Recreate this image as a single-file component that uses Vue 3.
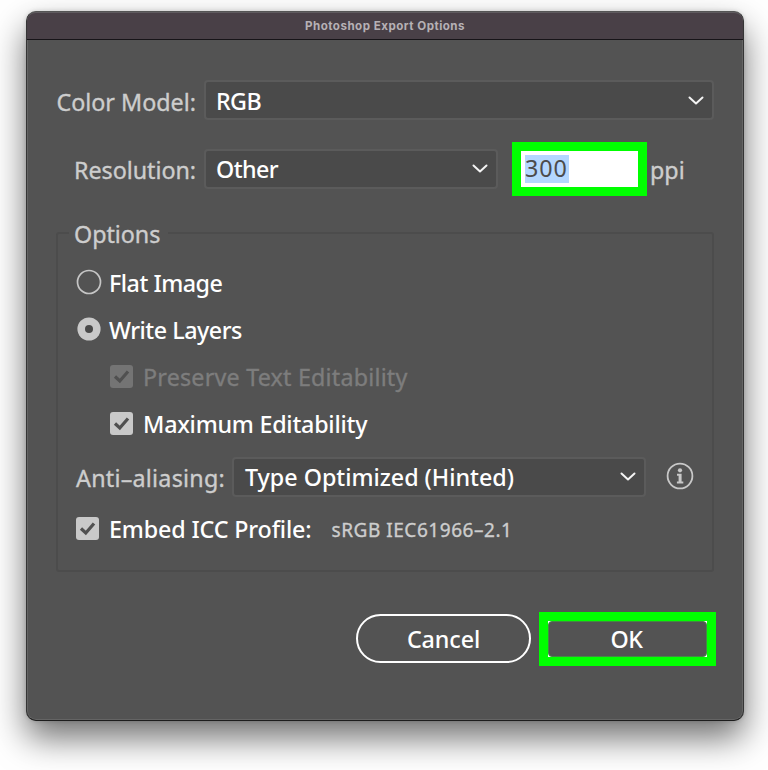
<script setup>
import { ref } from 'vue'

const resolution = ref('300')
const layerMode = ref('layers')
const modes = [
  { id: 'flat', label: 'Flat Image' },
  { id: 'layers', label: 'Write Layers' },
]
</script>

<template>
  <main class="desktop">
    <section class="dialog">
      <header class="titlebar">Photoshop Export Options</header>
      <div class="content">
        <div class="row model-row">
          <label class="label t-model">Color Model:</label>
          <div class="select wide">
            <span class="t-rgb">RGB</span>
            <svg class="chevron" viewBox="0 0 16 10"><path d="M1.5 1.5 8 7.5l6.5-6" /></svg>
          </div>
        </div>
        <div class="row res-row">
          <label class="label t-res">Resolution:</label>
          <div class="select mid">
            <span class="t-other">Other</span>
            <svg class="chevron" viewBox="0 0 16 10"><path d="M1.5 1.5 8 7.5l6.5-6" /></svg>
          </div>
          <div class="field"><span class="selection">{{ resolution }}</span></div>
          <span class="unit">ppi</span>
        </div>

        <div class="group">
          <div class="legend"><span class="t-options">Options</span></div>
          <div class="group-body">
            <div v-for="m in modes" :key="m.id" class="choice" :class="m.id" @click="layerMode = m.id">
              <svg class="radio" viewBox="0 0 26 26">
                <template v-if="layerMode === m.id">
                  <circle cx="13" cy="13" r="11.6" fill="#c9c9c9" />
                  <circle cx="13" cy="13" r="4" fill="#4a4a4a" />
                </template>
                <circle v-else cx="13" cy="13" r="11.5" fill="none" stroke="#c6c6c6" stroke-width="1.7" />
              </svg>
              <span>{{ m.label }}</span>
            </div>
            <div class="check preserve">
              <svg class="box" viewBox="0 0 23 23"><rect width="23" height="23" rx="3" /><path d="M5 11.5 9.8 16 18 6.5" /></svg>
              <span>Preserve Text Editability</span>
            </div>
            <div class="check maximum">
              <svg class="box" viewBox="0 0 23 23"><rect width="23" height="23" rx="3" /><path d="M5 11.5 9.8 16 18 6.5" /></svg>
              <span>Maximum Editability</span>
            </div>
            <div class="row aa-row">
              <label class="label t-aa">Anti–aliasing:</label>
              <div class="select aa">
                <span class="t-type">Type Optimized (Hinted)</span>
                <svg class="chevron" viewBox="0 0 16 10"><path d="M1.5 1.5 8 7.5l6.5-6" /></svg>
              </div>
              <svg class="info" viewBox="0 0 28 28">
                <circle cx="14" cy="14" r="12.4" fill="none" stroke="#c8c8c8" stroke-width="1.8" />
                <circle cx="14" cy="8.3" r="2.1" fill="#c8c8c8" />
                <path d="M11 11.8h4.6v7.7h1.7v1.9h-6.4v-1.900h1.700v-5.800H11z" fill="#c8c8c8" />
              </svg>
            </div>
            <div class="check embed">
              <svg class="box" viewBox="0 0 23 23"><rect width="23" height="23" rx="3" /><path d="M5 11.5 9.8 16 18 6.5" /></svg>
              <span class="t-embed">Embed ICC Profile:</span>
              <span class="profile">sRGB IEC61966–2.1</span>
            </div>
          </div>
        </div>

        <div class="actions">
          <button class="cancel"><span>Cancel</span></button>
          <div class="ok-frame"><button class="ok"><span>OK</span></button></div>
        </div>
      </div>
    </section>
  </main>
</template>

<style>
body {
  margin: 0;
  background: #fff;
}
</style>

<style scoped>
* {
  box-sizing: border-box;
}
.desktop {
  height: 770px;
  padding: 11px 0 0 26px;
  overflow: hidden;
  font-family: "Noto Sans", "Open Sans", sans-serif;
  font-size: 23.3px;
  font-weight: 500;
  line-height: 30px;
  color: #fff;
  white-space: nowrap;
}
.dialog {
  width: 718px;
  height: 710px;
  border: 1px solid #353535;
  border-top-color: #555;
  border-bottom-color: #1d1d1d;
  border-radius: 10px;
  background: #535353;
  box-shadow: inset 0 0 0 1px #646464, 0 17px 34px rgba(0, 0, 0, 0.56), 0 0 4px rgba(0, 0, 0, 0.16);
}
.titlebar {
  height: 28px;
  border-top: 1px solid #605c60;
  border-bottom: 1px solid #171418;
  border-radius: 9px 9px 0 0;
  background: #494047;
  font: 700 11.6px/27px Inter, sans-serif;
  letter-spacing: 0.48px;
  color: #b6b1b5;
  text-align: center;
}
.content {
  padding: 40px 29px 0;
}
.row {
  display: flex;
  align-items: center;
}
.label,
.unit,
.legend,
.preserve,
.profile {
  font-weight: 400;
  -webkit-text-stroke: 0.35px currentColor;
}
.label {
  color: #cdcdcd;
  text-align: right;
}
.model-row .label,
.res-row .label {
  width: 140px;
  margin-right: 8px;
  padding-top: 4px;
}
.res-row .label {
  padding-top: 2px;
  letter-spacing: -0.05px;
}
.select {
  display: flex;
  align-items: center;
  justify-content: space-between;
  height: 40px;
  padding: 0 8px 0 10px;
  border: 2px solid #5b5b5b;
  border-radius: 4px;
  background: #4a4a4a;
}
.wide {
  width: 510px;
}
.mid {
  width: 294px;
}
.t-rgb,
.t-other {
  letter-spacing: -0.6px;
}
.t-rgb {
  padding-top: 2px;
}
.model-row .chevron {
  margin-top: 1px;
}
.t-type {
  padding-left: 1px;
  letter-spacing: -0.03px;
}
.chevron {
  width: 16px;
  height: 10px;
  fill: none;
  stroke: #f4f4f4;
  stroke-width: 2;
  stroke-linecap: round;
  stroke-linejoin: round;
}
.res-row {
  height: 54px;
  margin-top: 22px;
}
.field {
  display: flex;
  align-items: center;
  width: 135px;
  height: 54px;
  margin-left: 14px;
  padding-left: 4px;
  border: 9px solid #0f0;
  background: #fff;
  color: #4c4c4c;
  font-weight: 400;
}
.selection {
  width: 44px;
  height: 28px;
  margin-top: -1px;
  line-height: 27px;
  background: #b4d7ff;
  letter-spacing: 0.9px;
}
.unit {
  margin: 1px 0 0 3px;
  color: #cdcdcd;
}
.group {
  height: 340px;
  margin-top: 36px;
  border: 2px solid #4c4c4c;
  border-radius: 3px;
}
.legend {
  width: max-content;
  height: 30px;
  margin: -15px 0 0 11px;
  padding: 0 8px 0 5px;
  background: #535353;
  color: #cdcdcd;
  letter-spacing: -0.05px;
}
.group-body {
  padding: 19px 0 0 18px;
}
.choice {
  display: flex;
  align-items: center;
  height: 30px;
  margin-bottom: 17px;
  letter-spacing: -0.5px;
}
.radio {
  width: 26px;
  height: 26px;
  margin: -2px 7px 0 0;
}
.check {
  display: flex;
  align-items: center;
  height: 30px;
}
.box {
  width: 23px;
  height: 23px;
  margin: -2px 10px 0 0;
  fill: #c9c9c9;
}
.box path {
  fill: none;
  stroke: #505050;
  stroke-width: 3.2;
}
.preserve,
.maximum {
  margin-left: 34px;
}
.preserve {
  color: #7d7d7d;
  letter-spacing: 0.2px;
}
.preserve .box {
  fill: #747474;
}
.maximum {
  margin-top: 17px;
  letter-spacing: -0.25px;
}
.aa-row {
  margin-top: 18px;
}
.t-aa {
  width: 149px;
  margin-right: 7px;
  padding-top: 1px;
  letter-spacing: 0.24px;
}
.aa {
  width: 414px;
}
.info {
  width: 28px;
  height: 28px;
  margin: -3px 0 0 20px;
}
.embed {
  margin-top: 17px;
}
.t-embed {
  letter-spacing: -0.15px;
}
.profile {
  margin: 1px 0 0 20px;
  color: #cdcdcd;
  font-size: 19px;
  letter-spacing: 0.54px;
}
.actions {
  display: flex;
  align-items: center;
  gap: 8px;
  margin: 40px 0 0 300px;
}
button {
  flex: none;
  margin: 0;
  padding: 0;
  background: #535353;
  color: #fff;
  font: inherit;
}
.cancel {
  width: 175px;
  height: 49px;
  margin-top: -1px;
  border: 2px solid #fff;
  border-radius: 25px;
  letter-spacing: -0.1px;
}
.ok-frame {
  width: 177px;
  height: 54px;
  flex: none;
  border: 9px solid #0f0;
  background: #fff;
}
.ok {
  display: block;
  width: 159px;
  height: 36px;
  padding-right: 2px;
  border: 1px solid #438a43;
  border-radius: 4px;
  letter-spacing: -0.6px;
}
</style>
